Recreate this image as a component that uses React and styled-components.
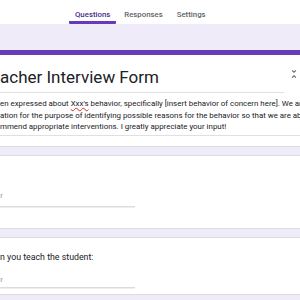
import React from 'react'
import styled, {createGlobalStyle} from 'styled-components'

const GlobalStyle = createGlobalStyle`
html, body {
  margin: 0;
  overflow: hidden;
}
body {
  background: #f0ebf8;
  font-family: Roboto, "Liberation Sans", sans-serif;
  color: #202124;
}
`

const tabs = ['Questions', 'Responses', 'Settings']

const descLines = [
  "en expressed about |Xxx's| behavior, specifically [insert behavior of concern here]. We are asking",
  'ation for the purpose of identifying possible reasons for the behavior so that we are able to',
  'mmend appropriate interventions. I greatly appreciate your input!',
]

const UnfoldLess = () => (
  <svg width="12" height="12" viewBox="0 0 24 24" fill="#5f6368">
    <path d="M7.41 18.59L8.83 20 12 16.83 15.17 20l1.41-1.41L12 14l-4.59 4.59zm9.18-13.18L15.17 4 12 7.17 8.83 4 7.41 5.41 12 10l4.59-4.59z" />
  </svg>
)

const renderLine = (line) =>
  line.split('|').map((part, i) =>
    i % 2 === 1 ? <Misspelled key={i}>{part}</Misspelled> : <span key={i}>{part}</span>
  )

const App = () => {
  return (
    <>
      <GlobalStyle />
      <TopBar>
        {tabs.map((t, i) => (
          <Tab key={t} active={i === 0}>{t}</Tab>
        ))}
      </TopBar>

      <Main>
        <Column>
          <HeaderCard>
            <TitleRow>
              <TitleField>acher Interview Form</TitleField>
              <IconBox><UnfoldLess /></IconBox>
            </TitleRow>
            <Description>
              {descLines.map((l, i) => (
                <DescLine key={i}>{renderLine(l)}</DescLine>
              ))}
            </Description>
          </HeaderCard>

          <QuestionCard top={35} bottom={21}>
            <AnswerField below={5}>
              <Placeholder>Your answer</Placeholder>
            </AnswerField>
          </QuestionCard>

          <QuestionCard top={13} bottom={6}>
            <QuestionText>n you teach the student:</QuestionText>
            <AnswerField below={2} spaced>
              <Placeholder>Your answer</Placeholder>
            </AnswerField>
          </QuestionCard>
        </Column>
      </Main>
    </>
  )
}

export default App

const TopBar = styled.div`
height: 24px;
background: #fff;
display: flex;
gap: 2px;
padding-left: 69px;
`

const Tab = styled.div`
box-sizing: border-box;
height: 24px;
padding: 10px 6px 0;
font-size: 7.8px;
line-height: 10px;
font-weight: 500;
color: ${({active}) => (active ? '#4a2a86' : '#5f6368')};
border-bottom: 3px solid ${({active}) => (active ? '#673ab7' : 'transparent')};
border-radius: 1px;
white-space: nowrap;
`

const Main = styled.div`
padding-top: 26px;
`

const Column = styled.div`
margin-left: -30px;
width: 348px;
display: flex;
flex-direction: column;
gap: 8px;
`

const Card = styled.div`
background: #fff;
border: 1px solid #dadce0;
border-radius: 6px;
padding-left: 29px;
padding-right: 13px;
`

const HeaderCard = styled(Card)`
border-top: 5px solid #673ab7;
padding-bottom: 10px;
`

const TitleRow = styled.div`
display: flex;
align-items: flex-start;
`

const TitleField = styled.div`
flex: 1;
padding: 10px 0 3px;
font-size: 17px;
line-height: 24px;
border-bottom: 1px solid #e0e0e0;
white-space: nowrap;
`

const IconBox = styled.div`
width: 20px;
display: flex;
justify-content: center;
padding-top: 13px;
`

const Description = styled.div`
margin-top: 5px;
padding-bottom: 2px;
border-bottom: 1px solid #e0e0e0;
overflow: hidden;
`

const DescLine = styled.div`
font-size: 7.9px;
line-height: 11.5px;
white-space: nowrap;
color: #202124;
`

const Misspelled = styled.span`
text-decoration: underline wavy #d93025;
text-decoration-thickness: 1px;
`

const QuestionCard = styled(Card)`
padding-top: ${({top}) => top}px;
padding-bottom: ${({bottom}) => bottom}px;
`

const QuestionText = styled.div`
font-size: 8.8px;
line-height: 12px;
white-space: nowrap;
`

const AnswerField = styled.div`
width: 135px;
margin-left: -29px;
padding-left: 29px;
box-sizing: content-box;
margin-top: ${({spaced}) => (spaced ? '12px' : '0')};
padding-bottom: ${({below}) => below}px;
border-bottom: 1px solid #dadce0;
box-shadow: 0 1px 0 #eeeeee;
height: 10px;
position: relative;
`

const Placeholder = styled.span`
position: absolute;
left: 0;
width: 32px;
text-align: right;
overflow: hidden;
font-size: 8px;
line-height: 10px;
color: #9aa0a6;
white-space: nowrap;
direction: rtl;
`
